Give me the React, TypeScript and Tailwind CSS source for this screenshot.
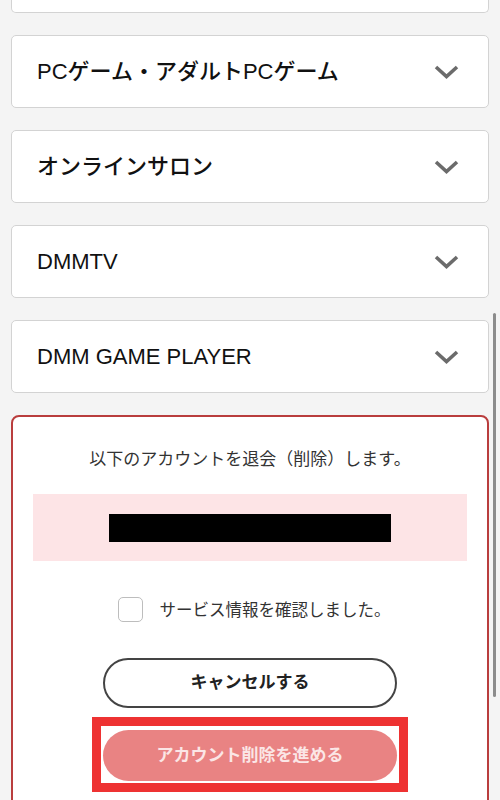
import React from "react";

const sections = [
  "PCゲーム・アダルトPCゲーム",
  "オンラインサロン",
  "DMMTV",
  "DMM GAME PLAYER",
];

function Chevron() {
  return (
    <svg width="25" height="14" viewBox="0 0 25 14" fill="none">
      <path d="M2 2 L12.5 11.5 L23 2" stroke="#6b6b6b" strokeWidth="3.6" strokeLinejoin="miter" />
    </svg>
  );
}

function SectionCard({ title }: { title: string }) {
  return (
    <div className="h-[73px] bg-white border border-[#d3d3d3] rounded-[5px] flex items-center justify-between pl-[25px] pr-[29px]">
      <span className="text-[22px] leading-[30px] font-medium text-[#111]">{title}</span>
      <Chevron />
    </div>
  );
}

export default function App() {
  return (
    <div
      className="relative w-[500px] h-[800px] overflow-hidden bg-[#f4f4f4]"
      style={{ fontFamily: '"Liberation Sans", "Noto Sans CJK JP", sans-serif' }}
    >
      <div className="flex flex-col gap-[22px] px-[11px]">
        <div className="h-[13px] bg-white border border-t-0 border-[#d3d3d3] rounded-b-[5px]" />
        {sections.map((s) => (
          <SectionCard key={s} title={s} />
        ))}
        <div className="bg-white border-2 border-[#b93d3d] rounded-[8px] pt-[31px] px-[20px] pb-[40px] flex flex-col items-center">
          <p className="text-[17px] leading-[24px] text-[#333]">以下のアカウントを退会（削除）します。</p>
          <div className="mt-[22px] w-full h-[67px] bg-[#fde4e6] flex items-center justify-center">
            <div className="w-[282px] h-[28px] bg-black" />
          </div>
          <label className="mt-[36px] flex items-center gap-[17px] pl-[8px]">
            <span className="w-[25px] h-[25px] border border-[#bdbdbd] rounded-[5px] bg-white" />
            <span className="text-[16.5px] leading-[24px] text-[#333]">サービス情報を確認しました。</span>
          </label>
          <button className="mt-[36px] w-[294px] h-[50px] rounded-full border-2 border-[#444] bg-white text-[17px] font-bold text-[#222]">
            キャンセルする
          </button>
          <div className="mt-[9px] border-[9px] border-[#ee3232] px-[2px] pt-[4px] pb-[2px]">
            <button className="w-[294px] h-[51px] rounded-full bg-[#e98383] text-[17px] font-bold text-[#fbe6e6]">
              アカウント削除を進める
            </button>
          </div>
        </div>
      </div>
      <div className="absolute left-[493px] top-[313px] w-[3px] h-[384px] rounded-full bg-[#8c8c8c]" />
    </div>
  );
}
